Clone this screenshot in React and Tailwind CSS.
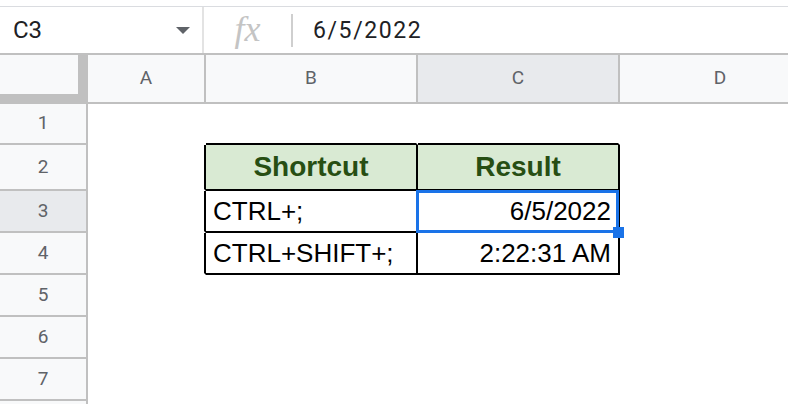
import React from "react";

const cols = [
  { key: "A", w: "w-[118px]" },
  { key: "B", w: "w-[212px]" },
  { key: "C", w: "w-[202px]" },
];

const rows = [
  { n: 1, h: "h-[41px]" },
  { n: 2, h: "h-[46px]" },
  { n: 3, h: "h-[42px]" },
  { n: 4, h: "h-[42px]" },
  { n: 5, h: "h-[42px]" },
  { n: 6, h: "h-[42px]" },
  { n: 7, h: "h-[42px]" },
  { n: 8, h: "h-[42px]" },
];

const RowHeader = ({ n, active }) => (
  <div
    className={`w-[88px] shrink-0 h-full flex items-center justify-center border-r-2 border-b-2 border-[#c0c0c0] text-[19px] text-[#5f6368] font-['Roboto',sans-serif] ${
      active ? "bg-[#e8eaed]" : "bg-[#f8f9fa]"
    }`}
  >
    {n < 8 ? n : ""}
  </div>
);

const App = () => {
  return (
    <div className="w-[788px] h-[404px] overflow-hidden bg-white font-['Liberation_Sans',Arial,sans-serif]">
      {/* top strip */}
      <div className="h-[7px] border-b border-[#dadce0]" />

      {/* Formula bar */}
      <div className="h-[48px] flex items-stretch border-b-2 border-[#c0c0c0]">
        <div className="w-[202px] shrink-0 flex items-center justify-between pl-[13px] pr-[12px]">
          <span className="text-[24px] text-[#202124] font-['Roboto',sans-serif] leading-none">
            C3
          </span>
          <svg width="14" height="7" viewBox="0 0 14 7">
            <path d="M0 0 L14 0 L7 7 Z" fill="#5f6368" />
          </svg>
        </div>
        <div className="w-[2px] bg-[#e3e3e3]" />
        <div className="w-[87px] shrink-0 flex items-center justify-center">
          <span className="font-['Liberation_Serif',serif] italic text-[36px] text-[#c4c4c4] leading-none -mt-[3px]">
            fx
          </span>
        </div>
        <div className="flex items-center">
          <div className="w-[2px] h-[33px] bg-[#cfcfcf]" />
        </div>
        <div className="flex items-center pl-[20px]">
          <span className="text-[23px] text-[#202124] font-['Roboto',sans-serif] tracking-[1.6px] leading-none">
            6/5/2022
          </span>
        </div>
      </div>

      {/* Column headers */}
      <div className="h-[49px] flex">
        <div className="w-[88px] shrink-0 h-full bg-[#f8f9fa] border-r-[10px] border-b-[10px] border-[#c0c0c0]" />
        {cols.map((c) => (
          <div
            key={c.key}
            className={`${c.w} shrink-0 h-full flex items-center justify-center border-r-2 border-b-2 border-[#c0c0c0] text-[19px] text-[#5f6368] font-['Roboto',sans-serif] ${
              c.key === "C" ? "bg-[#e8eaed]" : "bg-[#f8f9fa]"
            }`}
          >
            {c.key}
          </div>
        ))}
        <div className="w-[200px] shrink-0 h-full flex items-center justify-center border-b-2 border-[#c0c0c0] bg-[#f8f9fa] text-[19px] text-[#5f6368] font-['Roboto',sans-serif]">
          D
        </div>
      </div>

      {/* Data rows */}
      {rows.map((r) => (
        <div key={r.n} className={`${r.h} flex`}>
          <RowHeader n={r.n} active={r.n === 3} />

          {/* A */}
          <div
            className={`w-[118px] shrink-0 h-full border-r-2 border-b-2 border-b-white ${
              r.n >= 2 && r.n <= 4 ? "border-r-black" : "border-r-white"
            }`}
          />

          {/* B */}
          {r.n === 1 && (
            <div className="w-[212px] shrink-0 h-full border-r-2 border-r-white border-b-2 border-b-black" />
          )}
          {r.n === 2 && (
            <div className="w-[212px] shrink-0 h-full border-r-2 border-b-2 border-black bg-[#d9ead3] flex items-center justify-center text-[28px] font-bold text-[#274e13]">
              Shortcut
            </div>
          )}
          {r.n === 3 && (
            <div className="w-[212px] shrink-0 h-full border-r-2 border-b-2 border-black flex items-center pl-[7px] text-[26px] text-black">
              CTRL+;
            </div>
          )}
          {r.n === 4 && (
            <div className="w-[212px] shrink-0 h-full border-r-2 border-b-2 border-black flex items-center pl-[7px] text-[26px] text-black">
              CTRL+SHIFT+;
            </div>
          )}
          {r.n >= 5 && (
            <div className="w-[212px] shrink-0 h-full border-r-2 border-b-2 border-white" />
          )}

          {/* C */}
          {r.n === 1 && (
            <div className="w-[202px] shrink-0 h-full border-r-2 border-r-white border-b-2 border-b-black" />
          )}
          {r.n === 2 && (
            <div className="w-[202px] shrink-0 h-full border-r-2 border-b-2 border-black bg-[#d9ead3] flex items-center justify-center text-[28px] font-bold text-[#274e13]">
              Result
            </div>
          )}
          {r.n === 3 && (
            <div className="relative w-[202px] shrink-0 h-full border-r-2 border-b-2 border-black flex items-center justify-end pr-[7px] text-[26px] text-black">
              6/5/2022
              <div className="absolute -left-[2px] -top-[1px] w-[203px] h-[43px] border-[3px] border-[#1a73e8]" />
              <div className="absolute left-[195px] top-[36px] w-[11px] h-[11px] bg-[#1a73e8]" />
            </div>
          )}
          {r.n === 4 && (
            <div className="w-[202px] shrink-0 h-full border-r-2 border-b-2 border-black flex items-center justify-end pr-[7px] text-[26px] text-black">
              2:22:31 AM
            </div>
          )}
          {r.n >= 5 && (
            <div className="w-[202px] shrink-0 h-full border-r-2 border-b-2 border-white" />
          )}

          {/* D */}
          <div className="flex-1 h-full" />
        </div>
      ))}
    </div>
  );
};

export default App;
